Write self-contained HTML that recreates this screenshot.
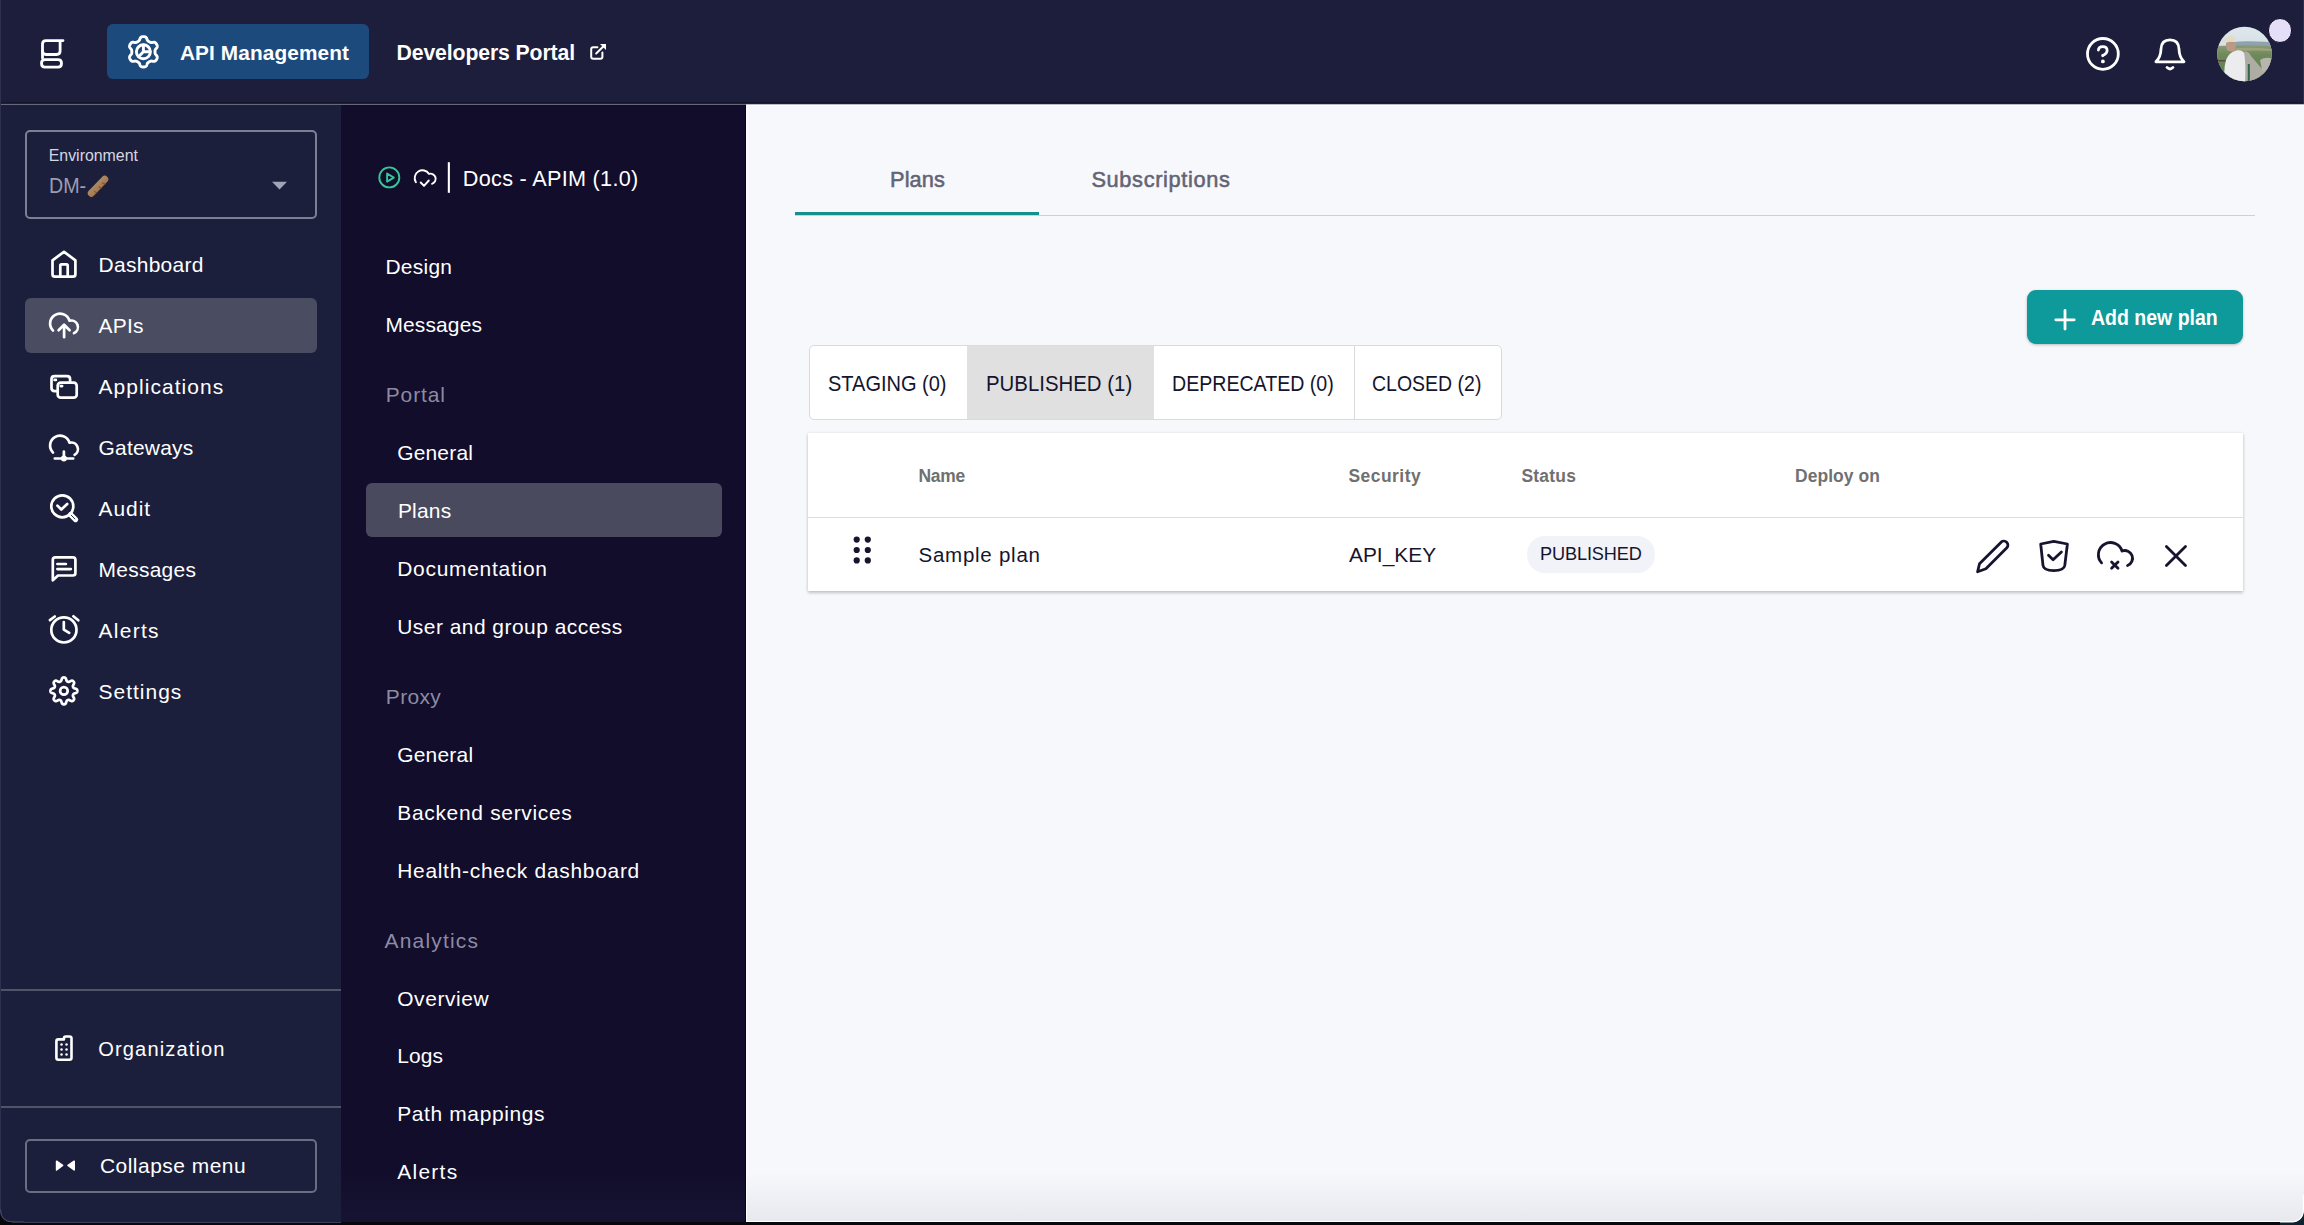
<!DOCTYPE html><html><head><meta charset="utf-8"><style>
html,body{margin:0;padding:0;width:2304px;height:1225px;overflow:hidden;background:#f7f8fc}
body{position:relative;font-family:"Liberation Sans",sans-serif}
.t{position:absolute;white-space:nowrap;line-height:normal}
.r{position:absolute;box-sizing:border-box}
.ic{position:absolute;overflow:visible}
</style></head><body>
<div class="r" style="left:0px;top:0px;width:2304px;height:104px;background:#1c1e3b;"></div>
<div class="r" style="left:0px;top:102px;width:2304px;height:1px;background:#15162b;"></div>
<div class="r" style="left:0px;top:104px;width:746px;height:1px;background:#66677c;"></div>
<div class="r" style="left:746px;top:104px;width:1558px;height:1px;background:#b9bac6;"></div>
<div class="r" style="left:0px;top:105px;width:341px;height:1120px;background:#1c1f3c;"></div>
<div class="r" style="left:341px;top:105px;width:405px;height:1120px;background:#110d2b;"></div>
<div class="r" style="left:746px;top:105px;width:1558px;height:1120px;background:#f7f8fc;"></div>
<div class="r" style="left:746px;top:105px;width:1.2px;height:1120px;background:#ffffff;"></div>
<div class="r" style="left:746px;top:105px;width:1558px;height:1px;background:#ffffff;"></div>
<div class="r" style="left:745px;top:105px;width:1px;height:1120px;background:#05041a;"></div>
<svg class="ic" style="left:32px;top:32px;" width="40" height="40" viewBox="0 0 40 40"><g fill="none" stroke="#ffffff" stroke-width="2.8" stroke-linejoin="round" stroke-linecap="round"><path d="M31 8.6 H14 Q10.5 8.6 10.5 12.1 V19 Q10.5 22.5 14 22.5 H24.6 Q28.1 22.5 28.1 19 V8.6"/><path d="M10.5 19 V26"/><path d="M13 27.6 H26 Q29.5 27.6 29.5 31.3 Q29.5 35.2 26 35.2 H13 Q9.5 35.2 9.5 31.3 Q9.5 27.6 13 27.6 Z"/></g></svg>
<div class="r" style="left:107px;top:24px;width:262px;height:55px;background:#1c4a7d;border-radius:6px"></div>
<svg class="ic" style="left:123px;top:32px;" width="40" height="40" viewBox="0 0 40 40"><g fill="none" stroke="#ffffff" stroke-width="2.9" stroke-linejoin="round" stroke-linecap="round"><path d="M32.00 19.80 L32.00 20.00 L32.00 20.21 L32.01 20.41 L32.02 20.61 L32.03 20.82 L32.06 21.03 L32.09 21.24 L32.14 21.45 L32.22 21.67 L32.32 21.90 L32.46 22.14 L32.63 22.40 L32.85 22.67 L33.09 22.96 L33.34 23.27 L33.59 23.58 L33.81 23.90 L33.99 24.22 L34.13 24.53 L34.21 24.83 L34.25 25.12 L34.25 25.40 L34.23 25.67 L34.18 25.93 L34.11 26.19 L34.02 26.44 L33.92 26.69 L33.81 26.93 L33.69 27.17 L33.56 27.40 L33.43 27.63 L33.28 27.85 L33.13 28.07 L32.96 28.27 L32.79 28.47 L32.60 28.66 L32.40 28.84 L32.17 29.00 L31.93 29.14 L31.66 29.25 L31.36 29.32 L31.02 29.36 L30.66 29.37 L30.27 29.33 L29.88 29.28 L29.48 29.21 L29.11 29.14 L28.77 29.09 L28.46 29.07 L28.18 29.07 L27.93 29.10 L27.70 29.14 L27.49 29.21 L27.29 29.28 L27.10 29.37 L26.91 29.46 L26.73 29.55 L26.55 29.65 L26.38 29.75 L26.20 29.85 L26.03 29.95 L25.85 30.05 L25.68 30.16 L25.51 30.27 L25.33 30.38 L25.17 30.51 L25.00 30.64 L24.84 30.79 L24.69 30.97 L24.54 31.17 L24.40 31.41 L24.26 31.69 L24.13 32.02 L24.00 32.37 L23.87 32.74 L23.72 33.12 L23.56 33.47 L23.37 33.78 L23.17 34.05 L22.95 34.27 L22.72 34.45 L22.48 34.60 L22.23 34.71 L21.98 34.80 L21.72 34.87 L21.46 34.92 L21.19 34.95 L20.93 34.98 L20.67 35.00 L20.40 35.00 L20.13 35.00 L19.87 34.98 L19.61 34.95 L19.34 34.92 L19.08 34.87 L18.82 34.80 L18.57 34.71 L18.32 34.60 L18.08 34.45 L17.85 34.27 L17.63 34.05 L17.43 33.78 L17.24 33.47 L17.08 33.12 L16.93 32.74 L16.80 32.37 L16.67 32.02 L16.54 31.69 L16.40 31.41 L16.26 31.17 L16.11 30.97 L15.96 30.79 L15.80 30.64 L15.63 30.51 L15.47 30.38 L15.29 30.27 L15.12 30.16 L14.95 30.05 L14.77 29.95 L14.60 29.85 L14.42 29.75 L14.25 29.65 L14.07 29.55 L13.89 29.46 L13.70 29.37 L13.51 29.28 L13.31 29.21 L13.10 29.14 L12.87 29.10 L12.62 29.07 L12.34 29.07 L12.03 29.09 L11.69 29.14 L11.32 29.21 L10.92 29.28 L10.53 29.33 L10.14 29.37 L9.78 29.36 L9.44 29.32 L9.14 29.25 L8.87 29.14 L8.63 29.00 L8.40 28.84 L8.20 28.66 L8.01 28.47 L7.84 28.27 L7.67 28.07 L7.52 27.85 L7.37 27.63 L7.24 27.40 L7.11 27.17 L6.99 26.93 L6.88 26.69 L6.78 26.44 L6.69 26.19 L6.62 25.93 L6.57 25.67 L6.55 25.40 L6.55 25.12 L6.59 24.83 L6.67 24.53 L6.81 24.22 L6.99 23.90 L7.21 23.58 L7.46 23.27 L7.71 22.96 L7.95 22.67 L8.17 22.40 L8.34 22.14 L8.48 21.90 L8.58 21.67 L8.66 21.45 L8.71 21.24 L8.74 21.03 L8.77 20.82 L8.78 20.61 L8.79 20.41 L8.80 20.21 L8.80 20.00 L8.80 19.80 L8.80 19.60 L8.80 19.39 L8.79 19.19 L8.78 18.99 L8.77 18.78 L8.74 18.57 L8.71 18.36 L8.66 18.15 L8.58 17.93 L8.48 17.70 L8.34 17.46 L8.17 17.20 L7.95 16.93 L7.71 16.64 L7.46 16.33 L7.21 16.02 L6.99 15.70 L6.81 15.38 L6.67 15.07 L6.59 14.77 L6.55 14.48 L6.55 14.20 L6.57 13.93 L6.62 13.67 L6.69 13.41 L6.78 13.16 L6.88 12.91 L6.99 12.67 L7.11 12.43 L7.24 12.20 L7.37 11.97 L7.52 11.75 L7.67 11.53 L7.84 11.33 L8.01 11.13 L8.20 10.94 L8.40 10.76 L8.63 10.60 L8.87 10.46 L9.14 10.35 L9.44 10.28 L9.78 10.24 L10.14 10.23 L10.53 10.27 L10.92 10.32 L11.32 10.39 L11.69 10.46 L12.03 10.51 L12.34 10.53 L12.62 10.53 L12.87 10.50 L13.10 10.46 L13.31 10.39 L13.51 10.32 L13.70 10.23 L13.89 10.14 L14.07 10.05 L14.25 9.95 L14.42 9.85 L14.60 9.75 L14.77 9.65 L14.95 9.55 L15.12 9.44 L15.29 9.33 L15.47 9.22 L15.63 9.09 L15.80 8.96 L15.96 8.81 L16.11 8.63 L16.26 8.43 L16.40 8.19 L16.54 7.91 L16.67 7.58 L16.80 7.23 L16.93 6.86 L17.08 6.48 L17.24 6.13 L17.43 5.82 L17.63 5.55 L17.85 5.33 L18.08 5.15 L18.32 5.00 L18.57 4.89 L18.82 4.80 L19.08 4.73 L19.34 4.68 L19.61 4.65 L19.87 4.62 L20.13 4.60 L20.40 4.60 L20.67 4.60 L20.93 4.62 L21.19 4.65 L21.46 4.68 L21.72 4.73 L21.98 4.80 L22.23 4.89 L22.48 5.00 L22.72 5.15 L22.95 5.33 L23.17 5.55 L23.37 5.82 L23.56 6.13 L23.72 6.48 L23.87 6.86 L24.00 7.23 L24.13 7.58 L24.26 7.91 L24.40 8.19 L24.54 8.43 L24.69 8.63 L24.84 8.81 L25.00 8.96 L25.17 9.09 L25.33 9.22 L25.51 9.33 L25.68 9.44 L25.85 9.55 L26.03 9.65 L26.20 9.75 L26.38 9.85 L26.55 9.95 L26.73 10.05 L26.91 10.14 L27.10 10.23 L27.29 10.32 L27.49 10.39 L27.70 10.46 L27.93 10.50 L28.18 10.53 L28.46 10.53 L28.77 10.51 L29.11 10.46 L29.48 10.39 L29.88 10.32 L30.27 10.27 L30.66 10.23 L31.02 10.24 L31.36 10.28 L31.66 10.35 L31.93 10.46 L32.17 10.60 L32.40 10.76 L32.60 10.94 L32.79 11.13 L32.96 11.33 L33.13 11.53 L33.28 11.75 L33.43 11.97 L33.56 12.20 L33.69 12.43 L33.81 12.67 L33.92 12.91 L34.02 13.16 L34.11 13.41 L34.18 13.67 L34.23 13.93 L34.25 14.20 L34.25 14.48 L34.21 14.77 L34.13 15.07 L33.99 15.38 L33.81 15.70 L33.59 16.02 L33.34 16.33 L33.09 16.64 L32.85 16.93 L32.63 17.20 L32.46 17.46 L32.32 17.70 L32.22 17.93 L32.14 18.15 L32.09 18.36 L32.06 18.57 L32.03 18.78 L32.02 18.99 L32.01 19.19 L32.00 19.39 L32.00 19.60 L32.00 19.80Z"/><circle cx="20.4" cy="19.8" r="7"/><path d="M20.4 13 V19.8 H27 M20.4 19.8 L15.8 24.6"/></g></svg>
<div class="t" style="left:180.00px;top:40.67px;font-size:20.81px;letter-spacing:0.100px;color:#ffffff;font-weight:700;">API Management</div>
<div class="t" style="left:396.50px;top:40.69px;font-size:21.23px;letter-spacing:-0.112px;color:#ffffff;font-weight:700;">Developers Portal</div>
<svg class="ic" style="left:580px;top:36px;" width="35" height="30" viewBox="0 0 35 30"><g fill="none" stroke="#ffffff" stroke-width="2" stroke-linecap="round" stroke-linejoin="round"><path d="M17.4 11.2 H13.2 Q11.2 11.2 11.2 13.2 V20.8 Q11.2 22.8 13.2 22.8 H20.4 Q22.4 22.8 22.4 20.8 V16.4"/><path d="M16.2 17.5 L23.5 10.3"/></g><path d="M20 8 H26 V14 Z" fill="#ffffff"/></svg>
<svg class="ic" style="left:2083px;top:33px;" width="40" height="40" viewBox="0 0 40 40"><g fill="none" stroke="#ffffff" stroke-width="2.8" stroke-linecap="round"><circle cx="19.9" cy="20.9" r="15.4"/><path d="M15.4 17 Q15.6 13.6 19.7 13.6 Q24.1 13.6 24.1 17.4 Q24.1 20.4 19.7 22.4 V22.8"/></g><circle cx="19.9" cy="28.4" r="1.9" fill="#ffffff"/></svg>
<svg class="ic" style="left:2150px;top:33px;" width="40" height="40" viewBox="0 0 40 40"><g fill="none" stroke="#ffffff" stroke-width="2.8" stroke-linecap="round" stroke-linejoin="round"><path d="M5.9 28.8 Q10.8 24 11 16 Q11.4 6.9 20 6.9 Q28.6 6.9 29 16 Q29.2 24 34 28.8 Z"/><path d="M17 34.4 Q20 37.6 23 34.4"/></g></svg>
<svg class="ic" style="left:2216px;top:26px" width="57" height="57" viewBox="0 0 57 57"><defs><clipPath id="av"><circle cx="28.5" cy="28" r="27.3"/></clipPath><linearGradient id="sky" x1="0" y1="0" x2="0" y2="1"><stop offset="0" stop-color="#dfe8ec"/><stop offset="1" stop-color="#c2d3da"/></linearGradient><linearGradient id="for" x1="0" y1="0" x2="0" y2="1"><stop offset="0" stop-color="#8d9a78"/><stop offset="0.25" stop-color="#6e8a5a"/><stop offset="1" stop-color="#587a48"/></linearGradient></defs><g clip-path="url(#av)"><rect x="0" y="0" width="57" height="57" fill="url(#sky)"/><path d="M18 16 Q30 14.5 57 16.5 V21 H18Z" fill="#8fa3ae"/><path d="M0 20 Q28 18.5 57 20 V57 H0Z" fill="url(#for)"/><path d="M20 22 Q40 21 57 23 V25 Q40 24 20 25Z" fill="#a9a982" opacity="0.7"/><path d="M27 26 Q32 24 35 30 Q40 36 47 44 Q50 50 52 57 H26Z" fill="#aeaca3"/><path d="M44 34 Q50 30 57 33 V52 Q50 50 46 44Z" fill="#b7b5ad"/><path d="M0 34 H28 V35.5 H0Z" fill="#5b4a3c"/><path d="M9 57 Q7 44 10 34 Q13 26 20 24.5 Q26 23.5 28 27 Q30 36 29 57Z" fill="#ececef"/><path d="M10 17 Q14 14.5 19.5 16.5 Q20.5 21 19 25 Q15 26.5 11 24 Q9.5 20 10 17Z" fill="#b99a85"/><path d="M5.5 15.5 Q9 10.5 15 10 Q20 10 20.5 15.5 Q14 15 10 16.5Z" fill="#e4dcc6"/><rect x="31.8" y="38" width="2" height="19" fill="#2f6650"/></g></svg>
<div class="r" style="left:2267.5px;top:18px;width:24.5px;height:24.5px;border-radius:50%;background:#e5def8;border:1.5px solid #0d0c25"></div>
<div class="r" style="left:24.5px;top:129.5px;width:292px;height:89px;border:2px solid #7e7f95;border-radius:5px"></div>
<div class="t" style="left:48.75px;top:147.29px;font-size:15.92px;letter-spacing:-0.015px;color:#d6d6e4;">Environment</div>
<div class="t" style="left:49.40px;top:174.26px;font-size:21.37px;letter-spacing:0.000px;color:#9c9db2;transform:scaleX(0.9206);transform-origin:0 0;">DM-</div>
<svg class="ic" style="left:82px;top:170px;" width="30" height="30" viewBox="0 0 30 30"><defs><linearGradient id="bg1" x1="0" y1="0" x2="1" y2="1"><stop offset="0" stop-color="#b79a6c"/><stop offset="0.6" stop-color="#a47d55"/><stop offset="1" stop-color="#8e5a3a"/></linearGradient></defs><path d="M9.3 23.2 L22.8 9.2" stroke="url(#bg1)" stroke-width="7" stroke-linecap="round"/><path d="M12.5 21.5 L15 23 M17 17 L19.8 18.3 M20.5 13 L23.2 14.2" stroke="#7e3f22" stroke-width="1.4" stroke-linecap="round" opacity="0.55"/></svg>
<svg class="ic" style="left:270px;top:180px;" width="20" height="12" viewBox="0 0 20 12"><path d="M2 1.8 H17 L9.5 9.4Z" fill="#a3a3b6"/></svg>
<div class="r" style="left:25px;top:298px;width:292px;height:54.5px;background:#4a4c62;border-radius:6px"></div>
<div class="t" style="left:98.60px;top:253.04px;font-size:20.95px;letter-spacing:0.300px;color:#ffffff;">Dashboard</div>
<div class="t" style="left:98.60px;top:314.04px;font-size:20.95px;letter-spacing:0.233px;color:#ffffff;">APIs</div>
<div class="t" style="left:98.60px;top:375.04px;font-size:20.95px;letter-spacing:1.064px;color:#ffffff;">Applications</div>
<div class="t" style="left:98.60px;top:436.04px;font-size:20.95px;letter-spacing:0.214px;color:#ffffff;">Gateways</div>
<div class="t" style="left:98.60px;top:497.04px;font-size:20.95px;letter-spacing:0.950px;color:#ffffff;">Audit</div>
<div class="t" style="left:98.60px;top:558.04px;font-size:20.95px;letter-spacing:0.271px;color:#ffffff;">Messages</div>
<div class="t" style="left:98.60px;top:619.04px;font-size:20.95px;letter-spacing:1.280px;color:#ffffff;">Alerts</div>
<div class="t" style="left:98.60px;top:680.04px;font-size:20.95px;letter-spacing:1.000px;color:#ffffff;">Settings</div>
<svg class="ic" style="left:44px;top:244px;" width="40" height="40" viewBox="0 0 40 40"><g fill="none" stroke="#ffffff" stroke-width="2.7" stroke-linecap="round" stroke-linejoin="round"><path d="M8.5 16.3 L20 7.8 L31.4 16.3 V30.2 Q31.4 32.7 28.9 32.7 H11 Q8.5 32.7 8.5 30.2 Z"/><path d="M16.3 32.7 V21.6 Q16.3 20.4 17.5 20.4 H22.5 Q23.7 20.4 23.7 21.6 V32.7"/></g></svg>
<svg class="ic" style="left:44px;top:305px;" width="40" height="40" viewBox="0 0 40 40"><g fill="none" stroke="#ffffff" stroke-width="2.7" stroke-linecap="round" stroke-linejoin="round"><path d="M9.00 25.60 A9.9 9.9 0 1 1 25.42 15.54 M25.77 15.68 A6.6 6.6 0 0 1 29.98 28.13"/><path d="M20.1 32.2 V20.2 M14.6 25.2 L20.1 19.7 L25.6 25.2"/></g></svg>
<svg class="ic" style="left:44px;top:366px;" width="40" height="40" viewBox="0 0 40 40"><g fill="none" stroke="#ffffff" stroke-width="2.7" stroke-linecap="round" stroke-linejoin="round"><path d="M13.7 25.2 H10.6 Q7.5 25.2 7.5 22.1 V13.2 Q7.5 10.1 10.6 10.1 H23 Q26.1 10.1 26.1 13.2 V16.7"/><rect x="13.7" y="16.7" width="19" height="15" rx="3"/><path d="M10.6 13.9 H11.9 M16.8 20.1 H18.1"/></g></svg>
<svg class="ic" style="left:44px;top:427px;" width="40" height="40" viewBox="0 0 40 40"><g fill="none" stroke="#ffffff" stroke-width="2.7" stroke-linecap="round" stroke-linejoin="round"><path d="M9.00 25.60 A9.9 9.9 0 1 1 25.42 15.54 M25.77 15.68 A6.6 6.6 0 0 1 30.60 27.82"/><path d="M10.8 31.5 H29.2 M19.9 24.6 V31.5"/><circle cx="19.9" cy="31.5" r="3" fill="#ffffff" stroke="none"/></g></svg>
<svg class="ic" style="left:44px;top:488px;" width="40" height="40" viewBox="0 0 40 40"><g fill="none" stroke="#ffffff" stroke-width="2.7" stroke-linecap="round" stroke-linejoin="round"><circle cx="18.3" cy="18.3" r="11"/><path d="M13.4 17.6 L17.3 21.5 L23.2 15.9"/><path d="M26.6 26.6 L31.6 31.6" stroke-width="5.2"/><path d="M27.3 27.3 L30.9 30.9" stroke="#1c1f3c" stroke-width="0.9"/></g></svg>
<svg class="ic" style="left:44px;top:549px;" width="40" height="40" viewBox="0 0 40 40"><g fill="none" stroke="#ffffff" stroke-width="2.7" stroke-linecap="round" stroke-linejoin="round"><path d="M8.8 31.3 V10.8 Q8.8 8.3 11.3 8.3 H28.9 Q31.4 8.3 31.4 10.8 V24 Q31.4 26.5 28.9 26.5 H14 Z"/><path d="M13.4 15 H21.9 M13.4 20.1 H26.8"/></g></svg>
<svg class="ic" style="left:44px;top:610px;" width="40" height="40" viewBox="0 0 40 40"><g fill="none" stroke="#ffffff" stroke-width="2.7" stroke-linecap="round" stroke-linejoin="round"><circle cx="19.9" cy="19.9" r="12.6"/><path d="M19.8 12.1 V19.6 L25.2 22.9"/><path d="M5.9 10.1 L10.8 6.5 M29.4 6.3 L34.3 10.3"/></g></svg>
<svg class="ic" style="left:44px;top:671px;" width="40" height="40" viewBox="0 0 40 40"><g fill="none" stroke="#ffffff" stroke-width="2.7" stroke-linecap="round" stroke-linejoin="round"><path d="M33.35 19.90 L33.34 20.13 L33.32 20.37 L33.27 20.60 L33.21 20.83 L33.11 21.06 L32.98 21.27 L32.80 21.48 L32.56 21.68 L32.25 21.86 L31.89 22.01 L31.48 22.15 L31.06 22.27 L30.67 22.39 L30.33 22.50 L30.05 22.62 L29.82 22.75 L29.64 22.88 L29.50 23.02 L29.38 23.17 L29.29 23.32 L29.20 23.47 L29.13 23.63 L29.06 23.79 L29.00 23.95 L28.95 24.12 L28.92 24.30 L28.89 24.48 L28.90 24.68 L28.93 24.90 L29.00 25.15 L29.11 25.44 L29.28 25.76 L29.47 26.12 L29.68 26.50 L29.87 26.88 L30.02 27.25 L30.11 27.59 L30.14 27.90 L30.12 28.18 L30.06 28.42 L29.97 28.65 L29.85 28.86 L29.72 29.06 L29.57 29.24 L29.41 29.41 L29.24 29.57 L29.06 29.72 L28.86 29.85 L28.65 29.97 L28.42 30.06 L28.18 30.12 L27.90 30.14 L27.59 30.11 L27.25 30.02 L26.88 29.87 L26.50 29.68 L26.12 29.47 L25.76 29.28 L25.44 29.11 L25.15 29.00 L24.90 28.93 L24.68 28.90 L24.48 28.89 L24.30 28.92 L24.12 28.95 L23.95 29.00 L23.79 29.06 L23.63 29.13 L23.47 29.20 L23.32 29.29 L23.17 29.38 L23.02 29.50 L22.88 29.64 L22.75 29.82 L22.62 30.05 L22.50 30.33 L22.39 30.67 L22.27 31.06 L22.15 31.48 L22.01 31.89 L21.86 32.25 L21.68 32.56 L21.48 32.80 L21.27 32.98 L21.06 33.11 L20.83 33.21 L20.60 33.27 L20.37 33.32 L20.13 33.34 L19.90 33.35 L19.67 33.34 L19.43 33.32 L19.20 33.27 L18.97 33.21 L18.74 33.11 L18.53 32.98 L18.32 32.80 L18.12 32.56 L17.94 32.25 L17.79 31.89 L17.65 31.48 L17.53 31.06 L17.41 30.67 L17.30 30.33 L17.18 30.05 L17.05 29.82 L16.92 29.64 L16.78 29.50 L16.63 29.38 L16.48 29.29 L16.33 29.20 L16.17 29.13 L16.01 29.06 L15.85 29.00 L15.68 28.95 L15.50 28.92 L15.32 28.89 L15.12 28.90 L14.90 28.93 L14.65 29.00 L14.36 29.11 L14.04 29.28 L13.68 29.47 L13.30 29.68 L12.92 29.87 L12.55 30.02 L12.21 30.11 L11.90 30.14 L11.62 30.12 L11.38 30.06 L11.15 29.97 L10.94 29.85 L10.74 29.72 L10.56 29.57 L10.39 29.41 L10.23 29.24 L10.08 29.06 L9.95 28.86 L9.83 28.65 L9.74 28.42 L9.68 28.18 L9.66 27.90 L9.69 27.59 L9.78 27.25 L9.93 26.88 L10.12 26.50 L10.33 26.12 L10.52 25.76 L10.69 25.44 L10.80 25.15 L10.87 24.90 L10.90 24.68 L10.91 24.48 L10.88 24.30 L10.85 24.12 L10.80 23.95 L10.74 23.79 L10.67 23.63 L10.60 23.47 L10.51 23.32 L10.42 23.17 L10.30 23.02 L10.16 22.88 L9.98 22.75 L9.75 22.62 L9.47 22.50 L9.13 22.39 L8.74 22.27 L8.32 22.15 L7.91 22.01 L7.55 21.86 L7.24 21.68 L7.00 21.48 L6.82 21.27 L6.69 21.06 L6.59 20.83 L6.53 20.60 L6.48 20.37 L6.46 20.13 L6.45 19.90 L6.46 19.67 L6.48 19.43 L6.53 19.20 L6.59 18.97 L6.69 18.74 L6.82 18.53 L7.00 18.32 L7.24 18.12 L7.55 17.94 L7.91 17.79 L8.32 17.65 L8.74 17.53 L9.13 17.41 L9.47 17.30 L9.75 17.18 L9.98 17.05 L10.16 16.92 L10.30 16.78 L10.42 16.63 L10.51 16.48 L10.60 16.33 L10.67 16.17 L10.74 16.01 L10.80 15.85 L10.85 15.68 L10.88 15.50 L10.91 15.32 L10.90 15.12 L10.87 14.90 L10.80 14.65 L10.69 14.36 L10.52 14.04 L10.33 13.68 L10.12 13.30 L9.93 12.92 L9.78 12.55 L9.69 12.21 L9.66 11.90 L9.68 11.62 L9.74 11.38 L9.83 11.15 L9.95 10.94 L10.08 10.74 L10.23 10.56 L10.39 10.39 L10.56 10.23 L10.74 10.08 L10.94 9.95 L11.15 9.83 L11.38 9.74 L11.62 9.68 L11.90 9.66 L12.21 9.69 L12.55 9.78 L12.92 9.93 L13.30 10.12 L13.68 10.33 L14.04 10.52 L14.36 10.69 L14.65 10.80 L14.90 10.87 L15.12 10.90 L15.32 10.91 L15.50 10.88 L15.68 10.85 L15.85 10.80 L16.01 10.74 L16.17 10.67 L16.33 10.60 L16.48 10.51 L16.63 10.42 L16.78 10.30 L16.92 10.16 L17.05 9.98 L17.18 9.75 L17.30 9.47 L17.41 9.13 L17.53 8.74 L17.65 8.32 L17.79 7.91 L17.94 7.55 L18.12 7.24 L18.32 7.00 L18.53 6.82 L18.74 6.69 L18.97 6.59 L19.20 6.53 L19.43 6.48 L19.67 6.46 L19.90 6.45 L20.13 6.46 L20.37 6.48 L20.60 6.53 L20.83 6.59 L21.06 6.69 L21.27 6.82 L21.48 7.00 L21.68 7.24 L21.86 7.55 L22.01 7.91 L22.15 8.32 L22.27 8.74 L22.39 9.13 L22.50 9.47 L22.62 9.75 L22.75 9.98 L22.88 10.16 L23.02 10.30 L23.17 10.42 L23.32 10.51 L23.47 10.60 L23.63 10.67 L23.79 10.74 L23.95 10.80 L24.12 10.85 L24.30 10.88 L24.48 10.91 L24.68 10.90 L24.90 10.87 L25.15 10.80 L25.44 10.69 L25.76 10.52 L26.12 10.33 L26.50 10.12 L26.88 9.93 L27.25 9.78 L27.59 9.69 L27.90 9.66 L28.18 9.68 L28.42 9.74 L28.65 9.83 L28.86 9.95 L29.06 10.08 L29.24 10.23 L29.41 10.39 L29.57 10.56 L29.72 10.74 L29.85 10.94 L29.97 11.15 L30.06 11.38 L30.12 11.62 L30.14 11.90 L30.11 12.21 L30.02 12.55 L29.87 12.92 L29.68 13.30 L29.47 13.68 L29.28 14.04 L29.11 14.36 L29.00 14.65 L28.93 14.90 L28.90 15.12 L28.89 15.32 L28.92 15.50 L28.95 15.68 L29.00 15.85 L29.06 16.01 L29.13 16.17 L29.20 16.33 L29.29 16.48 L29.38 16.63 L29.50 16.78 L29.64 16.92 L29.82 17.05 L30.05 17.18 L30.33 17.30 L30.67 17.41 L31.06 17.53 L31.48 17.65 L31.89 17.79 L32.25 17.94 L32.56 18.12 L32.80 18.32 L32.98 18.53 L33.11 18.74 L33.21 18.97 L33.27 19.20 L33.32 19.43 L33.34 19.67 L33.35 19.90Z"/><circle cx="19.9" cy="19.9" r="3.8"/></g></svg>
<div class="r" style="left:0px;top:989px;width:341px;height:2px;background:#525369;"></div>
<svg class="ic" style="left:48px;top:1030px;" width="32" height="36" viewBox="0 0 32 36"><g fill="none" stroke="#ffffff" stroke-width="2.6" stroke-linejoin="round"><path d="M8.4 11.4 Q8.4 9.4 10.4 9.4 H15.9 V8.5 Q15.9 6.5 17.9 6.5 H21.5 Q23.5 6.5 23.5 8.5 V27.7 Q23.5 29.7 21.5 29.7 H10.4 Q8.4 29.7 8.4 27.7 Z"/></g><circle cx="13.5" cy="14.4" r="1.25" fill="#ffffff"/><circle cx="13.5" cy="19.4" r="1.25" fill="#ffffff"/><circle cx="13.5" cy="24.5" r="1.25" fill="#ffffff"/><circle cx="18.5" cy="14.4" r="1.25" fill="#ffffff"/><circle cx="18.5" cy="19.4" r="1.25" fill="#ffffff"/><circle cx="18.5" cy="24.5" r="1.25" fill="#ffffff"/></svg>
<div class="t" style="left:98.30px;top:1037.80px;font-size:20.11px;letter-spacing:1.100px;color:#ffffff;">Organization</div>
<div class="r" style="left:0px;top:1106px;width:341px;height:2px;background:#525369;"></div>
<div class="r" style="left:24.5px;top:1138.5px;width:292.5px;height:54px;border:2px solid #6c6d83;border-radius:5px"></div>
<svg class="ic" style="left:48px;top:1150px;" width="36" height="30" viewBox="0 0 36 30"><g fill="#ffffff" stroke="#ffffff" stroke-width="1.6" stroke-linejoin="round"><path d="M8.6 11.2 L14.6 15.4 L8.6 19.9 Z"/><path d="M26.2 11.2 L20 15.4 L26.2 19.9 Z"/></g></svg>
<div class="t" style="left:99.90px;top:1154.34px;font-size:20.95px;letter-spacing:0.508px;color:#ffffff;">Collapse menu</div>
<svg class="ic" style="left:372px;top:158px;" width="85" height="40" viewBox="0 0 85 40"><g fill="none" stroke="#34c897" stroke-width="1.9" stroke-linejoin="round"><circle cx="17.3" cy="19.4" r="10"/><path d="M15.1 15.5 L21.8 19.6 L15.1 23.6 Z"/></g><g fill="none" stroke="#ffffff" stroke-width="1.9" stroke-linecap="round" stroke-linejoin="round"><path d="M43.9 24.2 A7 7 0 1 1 57 15.9 A4.8 4.8 0 0 1 60 25.8"/><path d="M48.7 24.5 L52 27.9 L56.8 22.5"/></g><rect x="75.8" y="4.2" width="2.1" height="30.6" fill="#ffffff"/></svg>
<div class="t" style="left:462.80px;top:165.51px;font-size:21.65px;letter-spacing:0.294px;color:#ffffff;">Docs - APIM (1.0)</div>
<div class="r" style="left:366px;top:483px;width:356px;height:54px;background:#4a4a5f;border-radius:6px"></div>
<div class="t" style="left:385.40px;top:255.44px;font-size:20.95px;letter-spacing:0.280px;color:#ffffff;">Design</div>
<div class="t" style="left:385.40px;top:313.34px;font-size:20.95px;letter-spacing:0.157px;color:#ffffff;">Messages</div>
<div class="t" style="left:385.80px;top:383.14px;font-size:20.95px;letter-spacing:0.860px;color:#8d8ba3;">Portal</div>
<div class="t" style="left:397.20px;top:441.04px;font-size:20.95px;letter-spacing:0.200px;color:#ffffff;">General</div>
<div class="t" style="left:397.90px;top:499.04px;font-size:20.95px;letter-spacing:0.225px;color:#ffffff;">Plans</div>
<div class="t" style="left:397.20px;top:557.04px;font-size:20.95px;letter-spacing:0.742px;color:#ffffff;">Documentation</div>
<div class="t" style="left:397.20px;top:615.04px;font-size:20.95px;letter-spacing:0.490px;color:#ffffff;">User and group access</div>
<div class="t" style="left:385.80px;top:685.14px;font-size:20.95px;letter-spacing:0.375px;color:#8d8ba3;">Proxy</div>
<div class="t" style="left:397.20px;top:743.04px;font-size:20.95px;letter-spacing:0.233px;color:#ffffff;">General</div>
<div class="t" style="left:397.30px;top:801.04px;font-size:20.95px;letter-spacing:0.693px;color:#ffffff;">Backend services</div>
<div class="t" style="left:397.20px;top:858.84px;font-size:20.95px;letter-spacing:0.719px;color:#ffffff;">Health-check dashboard</div>
<div class="t" style="left:384.50px;top:929.04px;font-size:20.95px;letter-spacing:1.213px;color:#8d8ba3;">Analytics</div>
<div class="t" style="left:397.20px;top:986.54px;font-size:20.95px;letter-spacing:0.614px;color:#ffffff;">Overview</div>
<div class="t" style="left:397.20px;top:1044.44px;font-size:20.95px;letter-spacing:0.133px;color:#ffffff;">Logs</div>
<div class="t" style="left:397.20px;top:1102.34px;font-size:20.95px;letter-spacing:0.642px;color:#ffffff;">Path mappings</div>
<div class="t" style="left:397.20px;top:1160.34px;font-size:20.95px;letter-spacing:1.300px;color:#ffffff;">Alerts</div>
<div class="t" style="left:890.00px;top:166.98px;font-size:21.79px;letter-spacing:0.100px;color:#636473;-webkit-text-stroke:0.55px #636473;">Plans</div>
<div class="t" style="left:1091.40px;top:166.98px;font-size:21.79px;letter-spacing:0.650px;color:#636473;-webkit-text-stroke:0.55px #636473;">Subscriptions</div>
<div class="r" style="left:795px;top:214.5px;width:1460px;height:1.2px;background:#cfd0d6;"></div>
<div class="r" style="left:795px;top:211.5px;width:244px;height:3.2px;background:#168f8f;"></div>
<div class="r" style="left:2027px;top:290px;width:216px;height:54px;background:#0e9a9a;border-radius:9px;box-shadow:0 1px 3px rgba(0,0,0,.25)"></div>
<svg class="ic" style="left:2052px;top:307px;" width="26" height="26" viewBox="0 0 26 26"><path d="M13 3.5 V22 M3.8 12.8 H22.2" stroke="#ffffff" stroke-width="2.8" stroke-linecap="round"/></svg>
<div class="t" style="left:2090.90px;top:305.31px;font-size:21.65px;letter-spacing:0.000px;color:#ffffff;font-weight:700;transform:scaleX(0.9012);transform-origin:0 0;">Add new plan</div>
<div class="r" style="left:808.5px;top:344.5px;width:693px;height:75px;border:1px solid #d9d9de;border-radius:5px;background:#fff;overflow:hidden"><div style="position:absolute;left:157px;top:0;width:187px;height:100%;background:#e0e0e0"></div><div style="position:absolute;left:544px;top:0;width:1px;height:100%;background:#d9d9de"></div></div>
<div class="t" style="left:828.00px;top:370.57px;font-size:22.35px;letter-spacing:0.000px;color:#16142e;transform:scaleX(0.8951);transform-origin:0 0;">STAGING (0)</div>
<div class="t" style="left:985.80px;top:370.57px;font-size:22.35px;letter-spacing:0.000px;color:#16142e;transform:scaleX(0.9126);transform-origin:0 0;">PUBLISHED (1)</div>
<div class="t" style="left:1171.70px;top:370.57px;font-size:22.35px;letter-spacing:0.000px;color:#16142e;transform:scaleX(0.8765);transform-origin:0 0;">DEPRECATED (0)</div>
<div class="t" style="left:1372.40px;top:370.57px;font-size:22.35px;letter-spacing:0.000px;color:#16142e;transform:scaleX(0.8724);transform-origin:0 0;">CLOSED (2)</div>
<div class="r" style="left:808px;top:433px;width:1435px;height:158px;background:#ffffff;box-shadow:0 2px 3px rgba(0,0,0,.2),0 0 3px rgba(0,0,0,.09)"></div>
<div class="t" style="left:918.50px;top:465.70px;font-size:17.46px;letter-spacing:-0.233px;color:#707070;font-weight:700;">Name</div>
<div class="t" style="left:1348.50px;top:465.70px;font-size:17.46px;letter-spacing:0.471px;color:#707070;font-weight:700;">Security</div>
<div class="t" style="left:1521.40px;top:465.70px;font-size:17.46px;letter-spacing:0.240px;color:#707070;font-weight:700;">Status</div>
<div class="t" style="left:1795.00px;top:465.70px;font-size:17.46px;letter-spacing:0.075px;color:#707070;font-weight:700;">Deploy on</div>
<div class="r" style="left:808px;top:516.5px;width:1435px;height:1.5px;background:#dedede;"></div>
<svg class="ic" style="left:848px;top:532px;" width="28" height="36" viewBox="0 0 28 36"><circle cx="8.7" cy="7.6" r="3.1" fill="#16142e"/><circle cx="8.7" cy="18" r="3.1" fill="#16142e"/><circle cx="8.7" cy="28.4" r="3.1" fill="#16142e"/><circle cx="19.8" cy="7.6" r="3.1" fill="#16142e"/><circle cx="19.8" cy="18" r="3.1" fill="#16142e"/><circle cx="19.8" cy="28.4" r="3.1" fill="#16142e"/></svg>
<div class="t" style="left:918.50px;top:542.72px;font-size:20.53px;letter-spacing:0.740px;color:#16142e;">Sample plan</div>
<div class="t" style="left:1348.50px;top:542.74px;font-size:20.95px;letter-spacing:0.000px;color:#16142e;transform:scaleX(0.9977);transform-origin:0 0;">API_KEY</div>
<div class="r" style="left:1527px;top:536px;width:128px;height:36.5px;background:#f2f3f9;border-radius:18px"></div>
<div class="t" style="left:1540.00px;top:544.47px;font-size:18.16px;letter-spacing:-0.125px;color:#16142e;">PUBLISHED</div>
<svg class="ic" style="left:1970px;top:535px;" width="110" height="45" viewBox="0 0 110 45"><g fill="none" stroke="#16142e" stroke-width="2.8" stroke-linejoin="round" stroke-linecap="round"><path d="M7.6 36.8 L9.5 28.7 L31.14 7.14 A4.05 4.05 0 0 1 36.86 12.86 L15.9 33.8 Z"/><path d="M70.7 9 L83.8 6.3 L97.4 9 L94.8 30.4 Q94 35.6 83.8 35.6 Q73.6 35.6 73 30.4 Z"/><path d="M78.5 20.3 L83.1 24.8 L91.4 16.9"/></g></svg>
<svg class="ic" style="left:2090px;top:535px;" width="110" height="45" viewBox="0 0 110 45"><g fill="none" stroke="#16142e" stroke-width="2.8" stroke-linecap="round" stroke-linejoin="round"><path d="M11.58 27.87 A12.1 12.1 0 1 1 32.04 16.06 A7.6 7.6 0 0 1 37.57 30.50"/><path d="M21.6 26.9 L28 33.3 M28 26.9 L21.6 33.3"/><path d="M76.4 11.5 L95.5 30.6 M95.5 11.5 L76.4 30.6"/></g></svg>
<div class="r" style="left:0px;top:0px;width:1.2px;height:1215px;background:#2e3050;"></div>
<div class="r" style="left:2302.8px;top:0px;width:1.2px;height:104px;background:#2e3050;"></div>
<div class="r" style="left:747px;top:1172px;width:1557px;height:50px;background:linear-gradient(to bottom,rgba(40,40,60,0),rgba(40,40,60,0.075))"></div>
<div class="r" style="left:747px;top:1221px;width:1557px;height:1px;background:#ffffff;"></div>
<div class="r" style="left:0px;top:1222px;width:2304px;height:3px;background:#07080c;"></div>
<div class="r" style="left:12px;top:1221.5px;width:329px;height:1px;background:#3e3f57;"></div>
<div class="r" style="left:341px;top:1170px;width:404px;height:52px;background:linear-gradient(to bottom,rgba(70,70,110,0),rgba(70,70,110,0.1))"></div>
<svg class="ic" style="left:0;top:1200px" width="24" height="25" viewBox="0 0 24 25"><path d="M0 9.5 Q0 22.5 13 22.5 H24 V25 H0Z" fill="#07080c"/><path d="M0.6 9.5 Q0.6 21.9 13 21.9 H24" fill="none" stroke="#4c4d66" stroke-width="1"/></svg>
<svg class="ic" style="left:2280px;top:1195px" width="24" height="30" viewBox="0 0 24 30"><path d="M24 12 V30 H0 V27.5 H10 Q24 27.5 24 13.5Z" fill="#0d2430"/><path d="M0 27 H10 Q23.4 27 23.4 13.5 V0" fill="none" stroke="#ffffff" stroke-width="1.2"/></svg>
</body></html>
